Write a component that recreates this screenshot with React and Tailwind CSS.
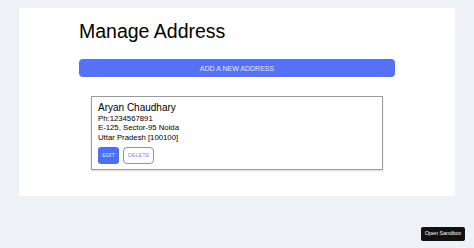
export default function App() {
  return (
    <div
      className="relative min-h-[248px] w-full bg-[#eef1f5] pt-[8px] pl-[19px]"
      style={{ fontFamily: '"Liberation Sans", Arial, sans-serif' }}
    >
      <div className="h-[188px] w-[436px] bg-white pl-[60px] pt-[12px]">
        <h1 className="text-[19.5px] leading-[22px] text-black">Manage Address</h1>
        <button className="mt-[17px] flex h-[18px] w-[316px] items-center justify-center rounded-[4px] bg-[#5670f6] text-[7px] leading-none text-[#e4e8ff]">
          ADD A NEW ADDRESS
        </button>
        <div className="ml-[12px] mt-[19px] w-[292px] border border-[#9b9b9b] pl-[6px] pt-[5px] pb-[5px] shadow-[0_1px_2px_rgba(0,0,0,0.15)]">
          <div className="text-[10px] leading-[12px] text-black">Aryan Chaudhary</div>
          <div className="text-[7.75px] leading-[9.3px] text-black">Ph:1234567891</div>
          <div className="text-[7.75px] leading-[9.3px] text-black">E-125, Sector-95 Noida</div>
          <div className="text-[7.75px] leading-[9.3px] text-black">Uttar Pradesh [100100]</div>
          <div className="mt-[5px] flex gap-[4px]">
            <button className="flex h-[17px] w-[21px] items-center justify-center rounded-[3px] bg-[#4f6ef7] text-[5.5px] leading-none text-[#dfe5ff]">
              EDIT
            </button>
            <button className="flex h-[17px] w-[31px] items-center justify-center rounded-[4px] border border-[#7f8fe8] bg-white text-[5.5px] leading-none text-[#8a93de]">
              DELETE
            </button>
          </div>
        </div>
      </div>
      <div className="absolute bottom-[7px] right-[9px] flex h-[14px] w-[44px] items-center justify-center rounded-[2px] bg-[#111111] text-[5.5px] leading-none text-white">
        Open Sandbox
      </div>
    </div>
  );
}
